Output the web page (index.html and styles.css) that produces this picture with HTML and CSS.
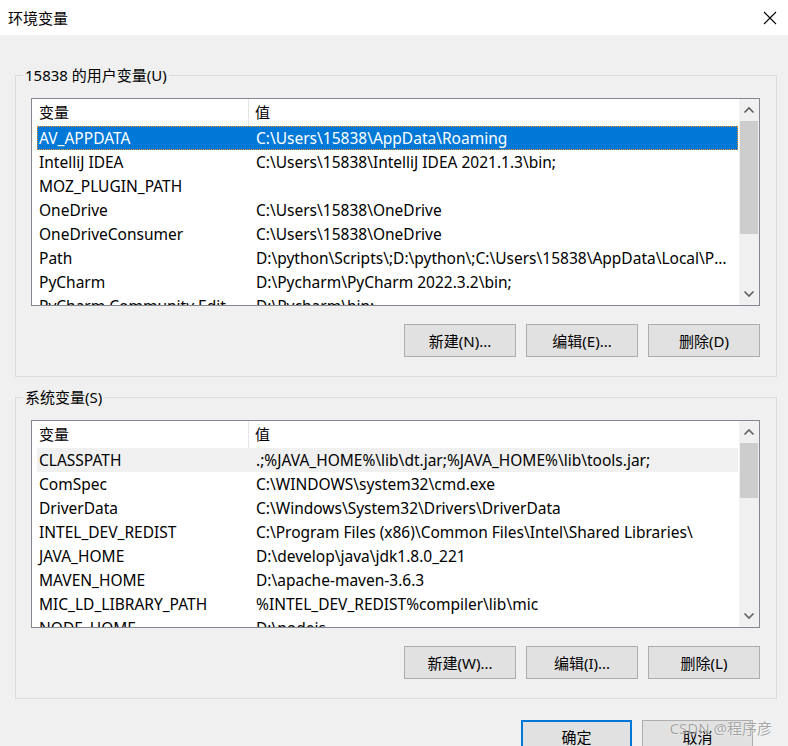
FILE: index.html
```html
<!DOCTYPE html>
<html lang="zh-CN">
<head>
  <meta charset="UTF-8">
  <title>环境变量</title>
  <link rel="stylesheet" href="styles.css">
</head>
<body>
  <div class="window">
    <div class="titlebar">
      <span class="title">环境变量</span>
      <svg class="close" width="14" height="14" viewBox="0 0 14 14">
        <path d="M1 1 L13 13 M13 1 L1 13" stroke="#000" stroke-width="1.1" fill="none"/>
      </svg>
    </div>

    <fieldset class="group">
      <legend>15838 的用户变量(U)</legend>
      <div class="list">
        <div class="list-body">
          <div class="head">
            <span class="col-name">变量</span>
            <span class="col-value">值</span>
          </div>
          <div class="row selected"><span class="col-name">AV_APPDATA</span><span class="col-value">C:\Users\15838\AppData\Roaming</span></div>
          <div class="row"><span class="col-name">IntelliJ IDEA</span><span class="col-value">C:\Users\15838\IntelliJ IDEA 2021.1.3\bin;</span></div>
          <div class="row"><span class="col-name">MOZ_PLUGIN_PATH</span><span class="col-value"></span></div>
          <div class="row"><span class="col-name">OneDrive</span><span class="col-value">C:\Users\15838\OneDrive</span></div>
          <div class="row"><span class="col-name">OneDriveConsumer</span><span class="col-value">C:\Users\15838\OneDrive</span></div>
          <div class="row"><span class="col-name">Path</span><span class="col-value">D:\python\Scripts\;D:\python\;C:\Users\15838\AppData\Local\Programs\Microsoft VS Code\bin</span></div>
          <div class="row"><span class="col-name">PyCharm</span><span class="col-value">D:\Pycharm\PyCharm 2022.3.2\bin;</span></div>
          <div class="row"><span class="col-name">PyCharm Community Edition</span><span class="col-value">D:\Pycharm\bin;</span></div>
        </div>
        <div class="scrollbar">
          <div class="arrow">
            <svg width="12" height="8" viewBox="0 0 12 8"><path d="M1.5 6.5 L6 2 L10.5 6.5" stroke="#606060" stroke-width="1.6" fill="none"/></svg>
          </div>
          <div class="track"><div class="thumb" style="height: 113px"></div></div>
          <div class="arrow">
            <svg width="12" height="8" viewBox="0 0 12 8"><path d="M1.5 1.5 L6 6 L10.5 1.5" stroke="#606060" stroke-width="1.6" fill="none"/></svg>
          </div>
        </div>
      </div>
      <div class="actions">
        <button class="btn">新建(N)...</button>
        <button class="btn">编辑(E)...</button>
        <button class="btn">删除(D)</button>
      </div>
    </fieldset>

    <fieldset class="group second">
      <legend>系统变量(S)</legend>
      <div class="list">
        <div class="list-body">
          <div class="head">
            <span class="col-name">变量</span>
            <span class="col-value">值</span>
          </div>
          <div class="row hover"><span class="col-name">CLASSPATH</span><span class="col-value">.;%JAVA_HOME%\lib\dt.jar;%JAVA_HOME%\lib\tools.jar;</span></div>
          <div class="row"><span class="col-name">ComSpec</span><span class="col-value">C:\WINDOWS\system32\cmd.exe</span></div>
          <div class="row"><span class="col-name">DriverData</span><span class="col-value">C:\Windows\System32\Drivers\DriverData</span></div>
          <div class="row"><span class="col-name">INTEL_DEV_REDIST</span><span class="col-value">C:\Program Files (x86)\Common Files\Intel\Shared Libraries\</span></div>
          <div class="row"><span class="col-name">JAVA_HOME</span><span class="col-value">D:\develop\java\jdk1.8.0_221</span></div>
          <div class="row"><span class="col-name">MAVEN_HOME</span><span class="col-value">D:\apache-maven-3.6.3</span></div>
          <div class="row"><span class="col-name">MIC_LD_LIBRARY_PATH</span><span class="col-value">%INTEL_DEV_REDIST%compiler\lib\mic</span></div>
          <div class="row"><span class="col-name">NODE_HOME</span><span class="col-value">D:\nodejs</span></div>
        </div>
        <div class="scrollbar">
          <div class="arrow">
            <svg width="12" height="8" viewBox="0 0 12 8"><path d="M1.5 6.5 L6 2 L10.5 6.5" stroke="#606060" stroke-width="1.6" fill="none"/></svg>
          </div>
          <div class="track"><div class="thumb" style="height: 55px"></div></div>
          <div class="arrow">
            <svg width="12" height="8" viewBox="0 0 12 8"><path d="M1.5 1.5 L6 6 L10.5 1.5" stroke="#606060" stroke-width="1.6" fill="none"/></svg>
          </div>
        </div>
      </div>
      <div class="actions">
        <button class="btn">新建(W)...</button>
        <button class="btn">编辑(I)...</button>
        <button class="btn">删除(L)</button>
      </div>
    </fieldset>

    <div class="footer">
      <button class="btn primary">确定</button>
      <button class="btn">取消</button>
    </div>

    <div class="watermark">CSDN @程序彦</div>
  </div>
</body>
</html>
```

FILE: styles.css
```css
html, body {
  margin: 0;
  height: 100%;
  overflow: hidden;
}
body {
  background: #f0f0f0;
  font-family: "Noto Sans", "Noto Sans CJK SC", sans-serif;
  font-size: 15px;
  color: #000;
}
.window {
  position: relative;
  height: 746px;
}
.titlebar {
  height: 35px;
  background: #fff;
  display: flex;
  align-items: center;
  justify-content: space-between;
  padding: 0 11px 0 8px;
}
.title {
  font-size: 15px;
  line-height: 20px;
}
.close {
  display: block;
}

.group {
  margin: 30px 11px 0 15px;
  padding: 0 16px 19px 15px;
  border: 1px solid #dcdcdc;
  min-width: 0;
}
.group.second {
  margin-top: 10px;
}
.group legend {
  margin-left: -8px;
  padding: 0 2px;
  line-height: 20px;
}

.list {
  margin-top: 13px;
  height: 208px;
  box-sizing: border-box;
  border: 1px solid #828790;
  background: #fff;
  display: flex;
  overflow: hidden;
}
.list-body {
  flex: 1;
  min-width: 0;
  padding-left: 5px;
  padding-right: 1px;
}
.head, .row {
  display: flex;
  white-space: nowrap;
}
.head {
  height: 27px;
  line-height: 26px;
}
.head .col-name {
  width: 212px;
  flex: none;
  box-sizing: border-box;
  padding-left: 2px;
  border-right: 1px solid #e5e5e5;
}
.head .col-value {
  padding-left: 6px;
}
.row {
  height: 24px;
  line-height: 24px;
  font-size: 15.5px;
}
.row .col-name {
  width: 212px;
  flex: none;
  box-sizing: border-box;
  padding-left: 2px;
  padding-right: 8px;
  overflow: hidden;
  text-overflow: ellipsis;
}
.row .col-value {
  flex: 1;
  min-width: 0;
  padding-left: 7px;
  padding-right: 6px;
  overflow: hidden;
  text-overflow: ellipsis;
}
.row.selected {
  background: #0078d7;
  color: #fff;
  outline: 1px dotted #f7931e;
  outline-offset: -1px;
}
.row.hover {
  background: #f0f0f0;
}

.scrollbar {
  width: 20px;
  flex: none;
  background: #f0f0f0;
  display: flex;
  flex-direction: column;
}
.arrow {
  height: 22px;
  display: flex;
  align-items: center;
  justify-content: center;
  flex: none;
}
.track {
  flex: 1;
}
.thumb {
  margin: 0 1px;
  background: #cdcdcd;
}

.actions {
  display: flex;
  justify-content: flex-end;
  gap: 10px;
  margin-top: 18px;
}
.btn {
  width: 112px;
  height: 33px;
  box-sizing: border-box;
  background: #e1e1e1;
  border: 1px solid #adadad;
  font-family: inherit;
  font-size: 15px;
  color: #000;
  padding: 0;
}
.footer {
  display: flex;
  justify-content: flex-end;
  gap: 10px;
  margin: 21px 35px 0 0;
}
.footer .btn {
  width: 111px;
}
.btn.primary {
  border: 2px solid #0078d7;
}

.watermark {
  position: absolute;
  right: 16px;
  bottom: 8px;
  font-size: 15px;
  color: rgba(140, 140, 140, 0.75);
  text-shadow: 0 0 2px #fff;
}
```
